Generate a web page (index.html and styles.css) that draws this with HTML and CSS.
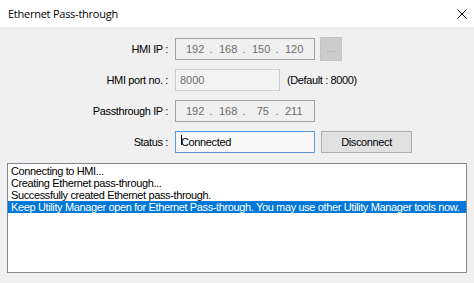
FILE: index.html
```html
<!DOCTYPE html>
<html>
<head>
<meta charset="utf-8">
<link rel="stylesheet" href="styles.css">
</head>
<body>
<div class="window">
  <div class="titlebar">
    <span class="title">Ethernet Pass-through</span>
    <svg class="close" width="10" height="10" viewBox="0 0 10 10"><path d="M0.5 0.5 L9.5 9.5 M9.5 0.5 L0.5 9.5" stroke="#000" stroke-width="1"/></svg>
  </div>
  <div class="form">
    <div class="label">HMI IP :</div>
    <div class="ctrls">
      <div class="ipbox">
        <span class="oct">192</span><span class="dot">.</span><span class="oct">168</span><span class="dot">.</span><span class="oct">150</span><span class="dot">.</span><span class="oct">120</span>
      </div>
      <div class="morebtn">...</div>
    </div>

    <div class="label">HMI port no. :</div>
    <div class="ctrls">
      <div class="portbox">8000</div>
      <div class="hint">(Default : 8000)</div>
    </div>

    <div class="label">Passthrough IP :</div>
    <div class="ctrls">
      <div class="ipbox">
        <span class="oct">192</span><span class="dot">.</span><span class="oct">168</span><span class="dot">.</span><span class="oct">75</span><span class="dot">.</span><span class="oct">211</span>
      </div>
    </div>

    <div class="label">Status :</div>
    <div class="ctrls">
      <div class="statusbox"><span class="caret"></span>Connected</div>
      <div class="btn">Disconnect</div>
    </div>
  </div>
  <div class="log">
    <div class="line">Connecting to HMI...</div>
    <div class="line">Creating Ethernet pass-through...</div>
    <div class="line">Successfully created Ethernet pass-through.</div>
    <div class="line sel">Keep Utility Manager open for Ethernet Pass-through. You may use other Utility Manager tools now.</div>
  </div>
</div>
</body>
</html>
```
FILE: styles.css
```css
html, body {
  margin: 0;
  padding: 0;
}
body {
  font-family: "Liberation Sans", Arial, sans-serif;
  font-size: 11px;
  letter-spacing: -0.37px;
  color: #000;
}
.window {
  width: 474px;
  height: 283px;
  background: #f0f0f0;
  display: flex;
  flex-direction: column;
  overflow: hidden;
}
.titlebar {
  height: 27px;
  background: #fff;
  display: flex;
  align-items: center;
  justify-content: space-between;
  padding: 0 7px 0 8px;
  box-sizing: border-box;
  flex-shrink: 0;
}
.title {
  font-family: "Open Sans", "Noto Sans", sans-serif;
  font-size: 11px;
  letter-spacing: -0.25px;
  color: #000;
}
.close {
  display: block;
}
.form {
  display: grid;
  grid-template-columns: 168px 1fr;
  column-gap: 7px;
  row-gap: 9px;
  padding-top: 11px;
  align-items: center;
}
.label {
  text-align: right;
  white-space: nowrap;
}
.ctrls {
  display: flex;
  align-items: center;
  height: 22px;
}
.ipbox {
  width: 140px;
  height: 22px;
  box-sizing: border-box;
  border: 1px solid #a2a2a2;
  background: #f0f0f0;
  display: flex;
  align-items: center;
  padding-left: 10px;
  color: #6d6d6d;
  letter-spacing: 0;
}
.oct {
  width: 17px;
  text-align: right;
}
.dot {
  width: 16px;
  text-align: center;
}
.morebtn {
  margin-left: 5px;
  width: 22px;
  height: 24px;
  box-sizing: border-box;
  background: #cccccc;
  border: 1px solid #c4c4c4;
  color: #9a9a9a;
  font-size: 9px;
  display: flex;
  align-items: center;
  justify-content: center;
  letter-spacing: 0.5px;
}
.portbox {
  width: 105px;
  height: 22px;
  box-sizing: border-box;
  border: 1px solid #cccccc;
  background: #f3f3f3;
  color: #6d6d6d;
  display: flex;
  align-items: center;
  padding-left: 4px;
  letter-spacing: 0;
}
.hint {
  margin-left: 7px;
}
.statusbox {
  width: 140px;
  height: 22px;
  box-sizing: border-box;
  border: 1px solid #5a9ad8;
  background: #f8f8f8;
  display: flex;
  align-items: center;
  padding-left: 5px;
  position: relative;
}
.caret {
  position: absolute;
  left: 5px;
  top: 3px;
  width: 1px;
  height: 10px;
  background: #000;
}
.btn {
  margin-left: 6px;
  width: 91px;
  height: 22px;
  box-sizing: border-box;
  background: #e1e1e1;
  border: 1px solid #adadad;
  display: flex;
  align-items: center;
  justify-content: center;
}
.log {
  margin: 10px 7px 10px 7px;
  flex: 1;
  background: #fff;
  border: 1px solid #828790;
  padding-top: 1px;
}
.line {
  height: 12px;
  line-height: 12px;
  padding-left: 3px;
  white-space: nowrap;
}
.sel {
  background: #0078d7;
  color: #fff;
}
```
